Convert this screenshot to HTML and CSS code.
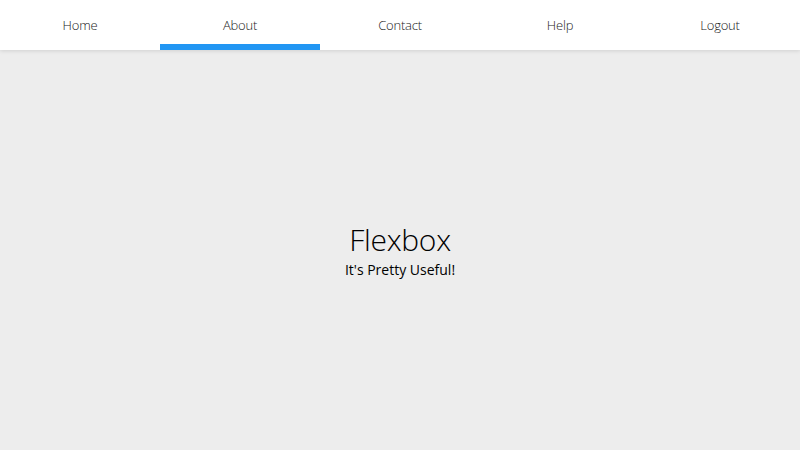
FILE: index.html
```html
<!DOCTYPE html>
<html lang="en">
  <head>
    <meta charset="UTF-8" />
    <meta name="viewport" content="width=device-width, initial-scale=1.0" />
    <title>Flexbox</title>
    <link rel="stylesheet" href="styles.css">
  </head>
  <body>
    <nav class="nav">
      <a href="#" class="nav-item">Home</a>
      <a href="#" class="nav-item active">About</a>
      <a href="#" class="nav-item">Contact</a>
      <a href="#" class="nav-item">Help</a>
      <a href="#" class="nav-item">Logout</a>
    </nav>
    <main class="hero">
      <h1>Flexbox</h1>
      <p>It's Pretty Useful!</p>
    </main>
  </body>
</html>
```

FILE: styles.css
```css
* {
  box-sizing: border-box;
  margin: 0;
  padding: 0;
}
body {
  font-family: "Open Sans", Arial, sans-serif;
  background-color: #ededed;
  height: 100vh;
  display: flex;
  flex-direction: column;
}
.nav {
  display: flex;
  height: 50px;
  background-color: #fff;
  box-shadow: 0 1px 4px rgba(0, 0, 0, 0.12);
  position: relative;
  z-index: 1;
}
.nav-item {
  flex: 1;
  display: flex;
  justify-content: center;
  align-items: center;
  font-size: 13px;
  font-weight: 300;
  letter-spacing: -0.2px;
  color: #1a1a1a;
  text-decoration: none;
  border-bottom: 6px solid transparent;
  padding-top: 6px;
}
.nav-item.active {
  border-bottom-color: #2196f3;
}
.hero {
  flex: 1;
  display: flex;
  flex-direction: column;
  justify-content: center;
  align-items: center;
  color: #000;
}
.hero h1 {
  font-size: 30px;
  font-weight: 300;
  letter-spacing: -0.3px;
  line-height: 40px;
}
.hero p {
  font-size: 14px;
  font-weight: 400;
  line-height: 20px;
}
```
